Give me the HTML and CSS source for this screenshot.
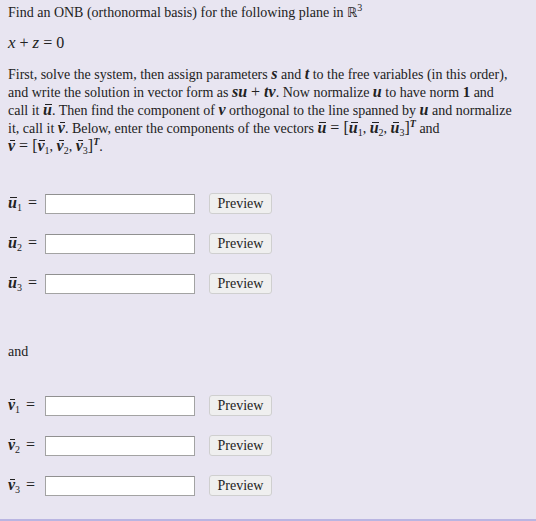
FILE: index.html
```html
<!DOCTYPE html>
<html lang="en">
<head>
    <meta charset="UTF-8">
    <title>ONB question</title>
    <link rel="stylesheet" href="styles.css">
</head>
<body>
    <div class="page">
        <p class="title">Find an ONB (orthonormal basis) for the following plane in <span class="bb">ℝ</span><sup class="pow">3</sup></p>

        <p class="equation"><i>x</i><span class="op">+</span><i>z</i><span class="op">=</span>0</p>

        <p class="intro">
            First, solve the system, then assign parameters <b class="m">s</b> and <b class="m">t</b> to the free variables (in this order),<br>
            and write the solution in vector form as <b class="m">su</b><span class="op">+</span><b class="m">tv</b>. Now normalize <b class="m">u</b> to have norm <b class="num">1</b> and<br>
            call it <b class="m bar">u</b>. Then find the component of <b class="m">v</b> orthogonal to the line spanned by <b class="m">u</b> and normalize<br>
            it, call it <b class="m bar">v</b>. Below, enter the components of the vectors <b class="m bar">u</b><span class="op">=</span><span class="br">[</span><b class="m bar">u</b><sub>1</sub>, <b class="m bar">u</b><sub>2</sub>, <b class="m bar">u</b><sub>3</sub><span class="br">]</span><sup class="tr">T</sup> and<br>
            <b class="m bar">v</b><span class="op">=</span><span class="br">[</span><b class="m bar">v</b><sub>1</sub>, <b class="m bar">v</b><sub>2</sub>, <b class="m bar">v</b><sub>3</sub><span class="br">]</span><sup class="tr">T</sup>.
        </p>

        <div class="answers first">
            <div class="answer-row">
                <span class="label"><b class="m bar">u</b><sub>1</sub><span class="op">=</span></span>
                <input type="text" class="answer">
                <button class="preview">Preview</button>
            </div>
            <div class="answer-row">
                <span class="label"><b class="m bar">u</b><sub>2</sub><span class="op">=</span></span>
                <input type="text" class="answer">
                <button class="preview">Preview</button>
            </div>
            <div class="answer-row">
                <span class="label"><b class="m bar">u</b><sub>3</sub><span class="op">=</span></span>
                <input type="text" class="answer">
                <button class="preview">Preview</button>
            </div>
        </div>

        <p class="and">and</p>

        <div class="answers">
            <div class="answer-row">
                <span class="label"><b class="m bar">v</b><sub>1</sub><span class="op">=</span></span>
                <input type="text" class="answer">
                <button class="preview">Preview</button>
            </div>
            <div class="answer-row">
                <span class="label"><b class="m bar">v</b><sub>2</sub><span class="op">=</span></span>
                <input type="text" class="answer">
                <button class="preview">Preview</button>
            </div>
            <div class="answer-row">
                <span class="label"><b class="m bar">v</b><sub>3</sub><span class="op">=</span></span>
                <input type="text" class="answer">
                <button class="preview">Preview</button>
            </div>
        </div>
    </div>
</body>
</html>
```

FILE: styles.css
```css
* {
    margin: 0;
    padding: 0;
    box-sizing: border-box;
}

body {
    background-color: #e8e5f1;
    font-family: 'Liberation Serif', 'Times New Roman', serif;
    font-size: 14px;
    line-height: 18px;
    color: #222;
}

.page {
    min-height: 521px;
    padding: 4px 8px 0;
    border-bottom: 2px solid #b9b5e2;
}

.title {
    margin-bottom: 12px;
    white-space: nowrap;
}

.bb {
    font-family: 'DejaVu Sans', sans-serif;
    font-size: 13px;
}

.pow {
    font-size: 10px;
    vertical-align: 6px;
    line-height: 0;
}

.equation {
    font-size: 16px;
    margin-bottom: 14px;
}

.equation i {
    font-family: 'Liberation Serif', serif;
    font-size: 17px;
}

.op {
    font-size: 16px;
    line-height: 0;
    margin: 0 4px;
}

.m {
    font-family: 'Liberation Serif', serif;
    font-style: italic;
    font-weight: bold;
    font-size: 16px;
    line-height: 0;
}

.num {
    font-size: 15px;
    line-height: 0;
}

/* bar accent drawn over the letter */
.bar {
    display: inline-block;
    position: relative;
    line-height: 14px;
}

.bar::before {
    content: "";
    position: absolute;
    left: 2px;
    right: 0;
    top: 1px;
    height: 1px;
    background: #222;
}

sub {
    font-size: 10px;
    line-height: 0;
    vertical-align: -3px;
}

.br {
    font-size: 16px;
    line-height: 0;
}

.tr {
    font-size: 10px;
    font-style: italic;
    font-weight: bold;
    line-height: 0;
    vertical-align: 6px;
}

.intro {
    white-space: nowrap;
}

.answers {
    margin-top: 34px;
    display: flex;
    flex-direction: column;
    gap: 19px;
}

.answers.first {
    margin-top: 37px;
}

.answer-row {
    display: flex;
    align-items: center;
    height: 21px;
}

.label {
    width: 37px;
    font-size: 14px;
    white-space: nowrap;
}

.label .op {
    margin: 0 0 0 6px;
}

.answer {
    width: 150px;
    height: 20px;
    background: #fff;
    border: 1px solid #a3a3a3;
    border-top-color: #909090;
    font-size: 13px;
}

.preview {
    margin-left: 14px;
    width: 63px;
    height: 21px;
    font-family: 'Liberation Serif', serif;
    font-size: 14px;
    color: #222;
    background: #efefef;
    border: 1px solid #cfcfcf;
    border-radius: 3px;
}

.and {
    margin-top: 49px;
}
```
